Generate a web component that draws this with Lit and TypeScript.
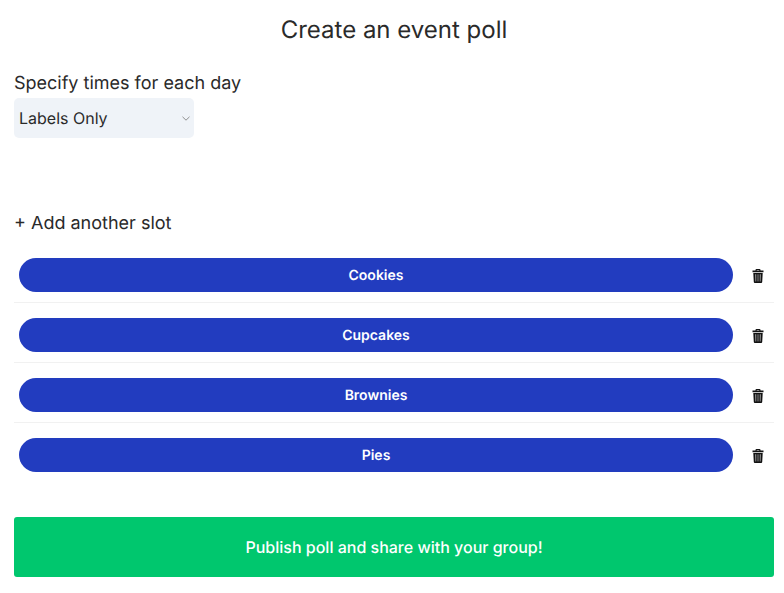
import { LitElement, html, css } from "lit";
import { customElement } from "lit/decorators.js";

@customElement("app-root")
export class AppRoot extends LitElement {
  static styles = css`
    :host { display: block; font-family: Inter, sans-serif; color: #2a2a2a; background: #fff; height: 593px; box-sizing: border-box; padding: 0 10px 0 14px; text-rendering: geometricPrecision; }
    h1 { margin: 0; padding-top: 15px; font-size: 24px; line-height: 29px; font-weight: 400; text-align: center; }
    .label { margin-top: 28px; font-size: 18px; line-height: 24px; }
    .select { margin-top: 2px; width: 180px; height: 40px; box-sizing: border-box; padding: 0 4px 0 5px; background: #eff3f8; border-radius: 5px; display: flex; align-items: center; justify-content: space-between; font-size: 16px; }
    .select svg { display: block; }
    .add { margin-top: 73px; font-size: 18px; line-height: 26px; }
    .rows { margin-top: 6px; }
    .row { display: flex; align-items: center; height: 60px; box-sizing: border-box; padding: 5px 5px 0; border-bottom: 1px solid #f1f1f1; }
    .row:last-child { border-bottom-color: transparent; }
    .pill { width: 714px; height: 34px; border-radius: 17px; background: #223cbf; color: #fff; font-size: 14px; font-weight: 600; display: flex; align-items: center; justify-content: center; }
    .trash { margin: 2px 0 0 18px; display: block; }
    .publish { margin-top: 34px; height: 60px; border-radius: 3px; background: #00c76e; color: #fff; font-size: 16px; font-weight: 500; display: flex; align-items: center; justify-content: center; }
  `;
  render() {
    const slots = ["Cookies", "Cupcakes", "Brownies", "Pies"];
    return html`
      <h1>Create an event poll</h1>
      <div class="label">Specify times for each day</div>
      <div class="select">
        <span>Labels Only</span>
        <svg width="8" height="5" viewBox="0 0 8 5" fill="none" stroke="#8f8f8f" stroke-width="1"><path d="M.5 .8 4 4.200 7.500 .8"/></svg>
      </div>
      <div class="add">+ Add another slot</div>
      <div class="rows">
        ${slots.map((s) => html`
          <div class="row">
            <div class="pill">${s}</div>
            <svg class="trash" width="14" height="14" viewBox="0 0 14 14">
              <path fill="#8a8a8a" d="M3 4h8v9H3z"/>
              <path fill="#111" d="M4.500 1.600V1a1 1 0 0 1 1-1h3a1 1 0 0 1 1 1v.6h3v1.600H1.500V1.600zM5.700 1.600h2.600V1H5.700zM2.300 3.900h9.400l-.5 9a1.100 1.100 0 0 1-1.100 1.100H3.900a1.100 1.100 0 0 1-1.100-1.100zM4 5.200l.3 7.400h1V5.200zM6.500 5.200v7.400h1V5.200zM8.700 5.200v7.400h1l.3-7.400z"/>
            </svg>
          </div>`)}
      </div>
      <div class="publish">Publish poll and share with your group!</div>
    `;
  }
}
